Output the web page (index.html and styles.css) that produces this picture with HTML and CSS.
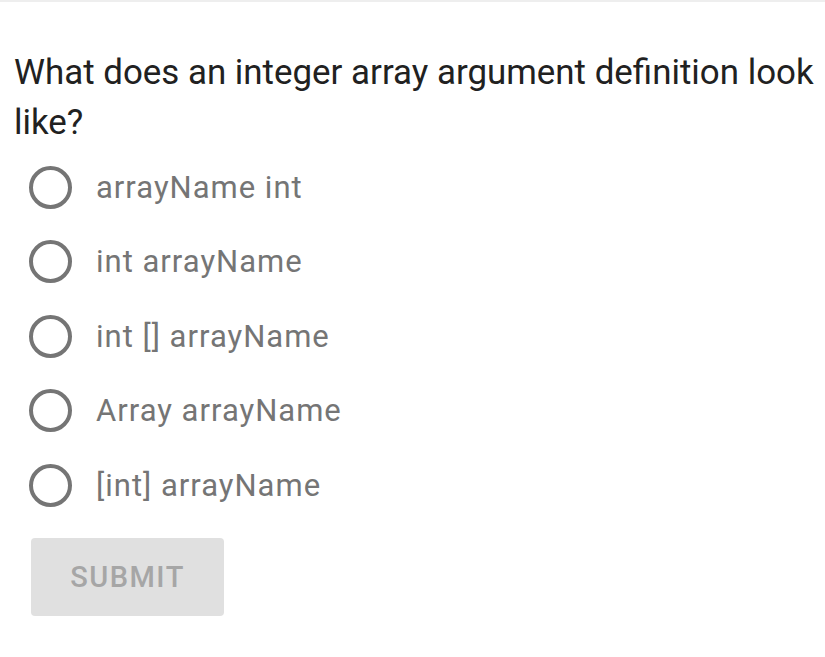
FILE: index.html
```html
<!DOCTYPE html>
<html lang="en">
<head>
    <meta charset="UTF-8">
    <meta name="viewport" content="width=device-width, initial-scale=1.0">
    <title>Quiz</title>
    <link rel="stylesheet" href="styles.css">
</head>
<body>
    <div class="quiz">
        <p class="question">What does an integer array argument definition look like?</p>
        <div class="options">
            <label class="option"><span class="radio"></span><span class="label">arrayName int</span></label>
            <label class="option"><span class="radio"></span><span class="label">int arrayName</span></label>
            <label class="option"><span class="radio"></span><span class="label">int [] arrayName</span></label>
            <label class="option"><span class="radio"></span><span class="label">Array arrayName</span></label>
            <label class="option"><span class="radio"></span><span class="label">[int] arrayName</span></label>
        </div>
        <button class="submit" disabled>SUBMIT</button>
    </div>
</body>
</html>
```

FILE: styles.css
```css
body {
    margin: 0;
    font-family: Roboto, "Liberation Sans", sans-serif;
    background: #fff;
}

.quiz {
    border-top: 2px solid #eeeeee;
    padding: 46px 0 0 14px;
}

.question {
    margin: 0;
    font-size: 34.9px;
    line-height: 50px;
    color: #212121;
}

.options {
    display: flex;
    flex-direction: column;
    margin-top: 2px;
}

.option {
    display: flex;
    align-items: center;
    height: 74.5px;
    padding-left: 15px;
}

.radio {
    width: 35px;
    height: 35px;
    border: 4px solid #757575;
    border-radius: 50%;
    flex-shrink: 0;
}

.label {
    margin-left: 24px;
    font-size: 31px;
    letter-spacing: 1px;
    color: #757575;
}

.submit {
    margin: 15px 0 0 17px;
    width: 193px;
    height: 78px;
    border: none;
    border-radius: 4px;
    background: #e0e0e0;
    color: #a6a6a6;
    font-family: Roboto, "Liberation Sans", sans-serif;
    font-size: 29px;
    font-weight: 500;
    letter-spacing: 1.5px;
}
```
